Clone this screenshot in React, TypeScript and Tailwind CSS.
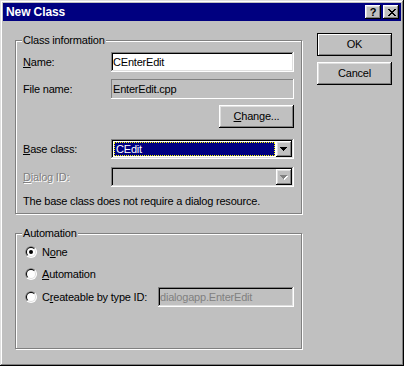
import React from "react";

const raised =
  "shadow-[inset_-1px_-1px_#000,inset_1px_1px_#fff,inset_-2px_-2px_#808080,inset_2px_2px_#dfdfdf]";
const sunken =
  "shadow-[inset_-1px_-1px_#fff,inset_1px_1px_#808080,inset_-2px_-2px_#dfdfdf,inset_2px_2px_#000]";
const staticEdge = "shadow-[inset_-1px_-1px_#fff,inset_1px_1px_#808080]";

function Arrow({ disabled }: { disabled?: boolean }) {
  const d = "M0 0h7v1H0zM1 1h5v1H1zM2 2h3v1H2zM3 3h1v1H3z";
  return (
    <svg width="8" height="5" viewBox="0 0 8 5" className="block">
      {disabled ? (
        <>
          <path d={d} fill="#fff" transform="translate(1 1)" />
          <path d={d} fill="#808080" />
        </>
      ) : (
        <path d={d} fill="#000" />
      )}
    </svg>
  );
}

function Combo({ value, disabled }: { value?: string; disabled?: boolean }) {
  return (
    <div
      className={`w-[183px] h-[20px] p-[2px] flex ${sunken} ${
        disabled ? "bg-[#c0c0c0]" : "bg-white"
      }`}
    >
      <div className="flex-1 p-[1px] pr-[1px]">
        {value && (
          <div className="h-full bg-[#000080] text-white border border-dotted border-[#ffff00] pl-[1px] flex items-center leading-[12px]">
            {value}
          </div>
        )}
      </div>
      <div
        className={`w-[16px] h-[16px] bg-[#c0c0c0] flex items-center justify-center pt-[1px] ${raised}`}
      >
        <Arrow disabled={disabled} />
      </div>
    </div>
  );
}

function Radio({ checked }: { checked?: boolean }) {
  const k = 4.243;
  const k2 = 3.536;
  return (
    <svg width="12" height="12" viewBox="0 0 12 12" className="block shrink-0">
      <circle cx="6" cy="6" r="6" fill="#fff" />
      <path d={`M${6 - k} ${6 + k}A6 6 0 0 1 ${6 + k} ${6 - k}Z`} fill="#808080" />
      <circle cx="6" cy="6" r="5" fill="#dfdfdf" />
      <path d={`M${6 - k2} ${6 + k2}A5 5 0 0 1 ${6 + k2} ${6 - k2}Z`} fill="#000" />
      <circle cx="6" cy="6" r="4" fill="#fff" />
      {checked && <circle cx="6" cy="6" r="2" fill="#000" />}
    </svg>
  );
}

function Group({
  label,
  className,
  children,
}: {
  label: string;
  className: string;
  children: React.ReactNode;
}) {
  return (
    <div
      className={`relative border border-[#808080] shadow-[inset_1px_1px_#fff,1px_1px_#fff] ${className}`}
    >
      <span className="absolute left-[6px] top-[-7px] bg-[#c0c0c0] px-[1px] leading-[13px]">
        {label}
      </span>
      {children}
    </div>
  );
}

function Btn({
  children,
  isDefault,
  className = "",
}: {
  children: React.ReactNode;
  isDefault?: boolean;
  className?: string;
}) {
  return (
    <div
      className={`w-[75px] h-[23px] bg-[#c0c0c0] flex items-center justify-center leading-[13px] ${
        isDefault
          ? "border border-black shadow-[inset_1px_1px_#fff,inset_-1px_-1px_#808080]"
          : raised
      } ${className}`}
    >
      {children}
    </div>
  );
}

const U = ({ children }: { children: React.ReactNode }) => (
  <span className="underline underline-offset-[1px] decoration-1">{children}</span>
);

export default function App() {
  const closePath =
    "M0 0h2v1H0zM6 0h2v1H6zM1 1h2v1H1zM5 1h2v1H5zM2 2h4v1H2zM3 3h2v1H3zM2 4h4v1H2zM1 5h2v1H1zM5 5h2v1H5zM0 6h2v1H0zM6 6h2v1H6z";
  return (
    <div className="w-[404px] h-[366px] bg-[#c0c0c0] p-[3px] font-['Liberation_Sans',Arial,sans-serif] text-[11px] tracking-[-0.2px] text-black shadow-[inset_-1px_-1px_#000,inset_1px_1px_#dfdfdf,inset_-2px_-2px_#808080,inset_2px_2px_#fff] select-none">
      {/* Title bar */}
      <div className="h-[18px] bg-[#000080] flex items-center justify-between pl-[3px] pr-[2px]">
        <span className="text-white font-bold text-[12px] tracking-[-0.1px] leading-[14px]">
          New Class
        </span>
        <div className="flex gap-[2px]">
          <div
            className={`w-[16px] h-[14px] bg-[#c0c0c0] flex items-center justify-center ${raised}`}
          >
            <span className="font-bold text-[11px] leading-[11px] tracking-normal">?</span>
          </div>
          <div
            className={`w-[16px] h-[14px] bg-[#c0c0c0] flex items-center justify-center pl-[1px] ${raised}`}
          >
            <svg width="8" height="7" viewBox="0 0 8 7" className="block">
              <path d={closePath} fill="#000" />
            </svg>
          </div>
        </div>
      </div>

      {/* Body */}
      <div className="flex">
        <div className="pl-[12px] pt-[19px] flex flex-col">
          <Group label="Class information" className="w-[287px] h-[174px]">
            <div className="flex items-center mt-[11px] ml-[7px] h-[20px]">
              <span className="w-[88px]">
                <U>N</U>ame:
              </span>
              <div className={`w-[183px] h-[20px] bg-white pl-[2px] flex items-center ${sunken}`}>
                CEnterEdit
              </div>
            </div>
            <div className="flex items-center mt-[7px] ml-[7px] h-[20px]">
              <span className="w-[88px]">File name:</span>
              <div className={`w-[183px] h-[20px] pl-[2px] flex items-center ${staticEdge}`}>
                EnterEdit.cpp
              </div>
            </div>
            <div className="flex mt-[6px] pl-[203px]">
              <Btn>
                <U>C</U>hange...
              </Btn>
            </div>
            <div className="flex items-center mt-[11px] ml-[7px] h-[20px]">
              <span className="w-[88px]">
                <U>B</U>ase class:
              </span>
              <Combo value="CEdit" />
            </div>
            <div className="flex items-center mt-[8px] ml-[7px] h-[20px]">
              <span className="w-[88px] text-[#808080] [text-shadow:1px_1px_#fff]">
                <U>D</U>ialog ID:
              </span>
              <Combo disabled />
            </div>
            <div className="mt-[8px] ml-[7px] leading-[13px]">
              The base class does not require a dialog resource.
            </div>
          </Group>

          <Group label="Automation" className="w-[287px] h-[116px] mt-[19px]">
            <div className="flex items-center mt-[10px] pl-[9px] h-[16px] gap-[5px]">
              <Radio checked />
              <span>
                N<U>o</U>ne
              </span>
            </div>
            <div className="flex items-center mt-[6px] pl-[9px] h-[16px] gap-[5px]">
              <Radio />
              <span>
                <U>A</U>utomation
              </span>
            </div>
            <div className="flex items-center mt-[5px] pl-[9px] h-[20px] gap-[5px]">
              <Radio />
              <span className="w-[111px]">
                C<U>r</U>eateable by type ID:
              </span>
              <div
                className={`w-[136px] h-[20px] bg-[#c0c0c0] pl-[2px] flex items-center text-[#808080] ${sunken}`}
              >
                dialogapp.EnterEdit
              </div>
            </div>
          </Group>
        </div>

        <div className="ml-[15px] pt-[12px] flex flex-col gap-[6px]">
          <Btn isDefault>OK</Btn>
          <Btn>Cancel</Btn>
        </div>
      </div>
    </div>
  );
}
